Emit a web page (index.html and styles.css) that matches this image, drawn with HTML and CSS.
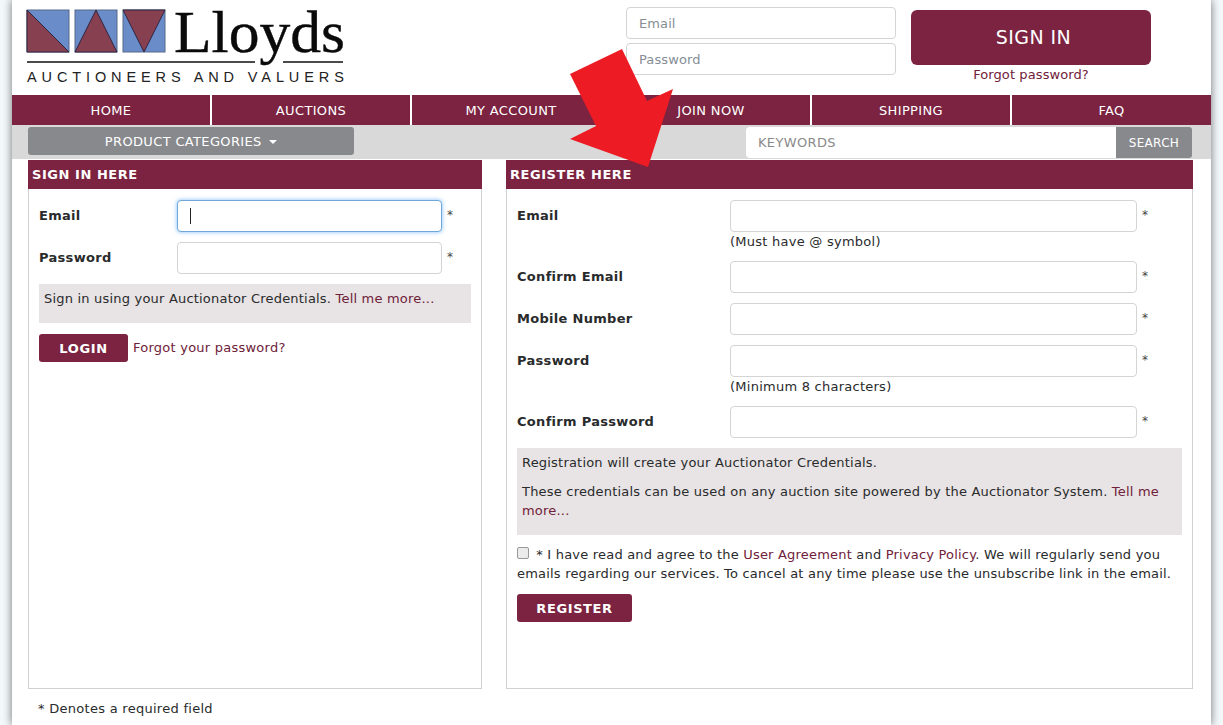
FILE: index.html
```html
<!DOCTYPE html>
<html lang="en">
<head>
    <meta charset="UTF-8">
    <meta name="viewport" content="width=device-width, initial-scale=1.0">
    <title>Lloyds Auctioneers - Sign In</title>
    <link rel="stylesheet" href="styles.css">
</head>
<body>
    <div class="page">
        <header class="top">
            <svg class="logo" width="340" height="95" viewBox="0 0 340 95">
                <rect x="15" y="10" width="42" height="42" fill="#6a8cc9" stroke="#56688a" stroke-width="1"/>
                <path d="M15 10L57 52H15Z" fill="#87404f" stroke="#2e2440" stroke-width="1"/>
                <rect x="63" y="10" width="42" height="42" fill="#6a8cc9" stroke="#56688a" stroke-width="1"/>
                <path d="M84 10L105 52H63Z" fill="#87404f" stroke="#2e2440" stroke-width="1"/>
                <rect x="111" y="10" width="42" height="42" fill="#6a8cc9" stroke="#56688a" stroke-width="1"/>
                <path d="M111 10H153L132 52Z" fill="#87404f" stroke="#2e2440" stroke-width="1"/>
                <text x="162" y="52" class="logo-name" textLength="171" lengthAdjust="spacingAndGlyphs">Lloyds</text>
                <path d="M15 62H243M271 62H331" stroke="#111" stroke-width="1.5"/>
                <text x="15" y="82" class="logo-sub" textLength="317">AUCTIONEERS AND VALUERS</text>
            </svg>
            <form class="quick-login">
                <div class="quick-fields">
                    <input class="field" type="text" placeholder="Email">
                    <input class="field" type="password" placeholder="Password">
                </div>
                <div class="quick-action">
                    <button class="signin-big" type="button">SIGN IN</button>
                    <a class="link" href="#">Forgot password?</a>
                </div>
            </form>
        </header>

        <nav class="menu">
            <a href="#">HOME</a>
            <a href="#">AUCTIONS</a>
            <a href="#">MY ACCOUNT</a>
            <a href="#">JOIN NOW</a>
            <a href="#">SHIPPING</a>
            <a href="#">FAQ</a>
        </nav>

        <div class="toolbar">
            <button class="categories" type="button">PRODUCT CATEGORIES <span class="caret"></span></button>
            <div class="search">
                <input type="text" placeholder="KEYWORDS">
                <button type="button">SEARCH</button>
            </div>
        </div>

        <main class="panels">
            <section class="panel panel-left">
                <h2>SIGN IN HERE</h2>
                <div class="panel-body">
                    <div class="row">
                        <label>Email</label>
                        <input class="field focused" type="text">
                        <span class="star">*</span>
                        <i class="cursor"></i>
                    </div>
                    <div class="row">
                        <label>Password</label>
                        <input class="field" type="password">
                        <span class="star">*</span>
                    </div>
                    <div class="info info-short">
                        <p>Sign in using your Auctionator Credentials. <a class="link" href="#">Tell me more...</a></p>
                    </div>
                    <div class="actions">
                        <button class="btn btn-login" type="button">LOGIN</button>
                        <a class="link" href="#">Forgot your password?</a>
                    </div>
                </div>
            </section>

            <section class="panel panel-right">
                <h2>REGISTER HERE</h2>
                <div class="panel-body">
                    <div class="row has-note">
                        <label>Email</label>
                        <input class="field" type="text">
                        <span class="star">*</span>
                        <small>(Must have @ symbol)</small>
                    </div>
                    <div class="row">
                        <label>Confirm Email</label>
                        <input class="field" type="text">
                        <span class="star">*</span>
                    </div>
                    <div class="row">
                        <label>Mobile Number</label>
                        <input class="field" type="text">
                        <span class="star">*</span>
                    </div>
                    <div class="row has-note">
                        <label>Password</label>
                        <input class="field" type="password">
                        <span class="star">*</span>
                        <small>(Minimum 8 characters)</small>
                    </div>
                    <div class="row">
                        <label>Confirm Password</label>
                        <input class="field" type="password">
                        <span class="star">*</span>
                    </div>
                    <div class="info">
                        <p>Registration will create your Auctionator Credentials.</p>
                        <p>These credentials can be used on any auction site powered by the Auctionator System. <a class="link" href="#">Tell me more...</a></p>
                    </div>
                    <p class="agree">
                        <input type="checkbox">
                        * I have read and agree to the <a class="link" href="#">User Agreement</a> and <a class="link" href="#">Privacy Policy</a>. We will regularly send you emails regarding our services. To cancel at any time please use the unsubscribe link in the email.
                    </p>
                    <button class="btn btn-register" type="button">REGISTER</button>
                </div>
            </section>
        </main>

        <footer class="note">* Denotes a required field</footer>
    </div>

    <svg class="arrow" width="110" height="125" viewBox="0 0 110 125">
        <path d="M0 25L52 0L77 52L103 40L78 118L0 90L26 77Z" fill="#ed1c24"/>
    </svg>
</body>
</html>
```

FILE: styles.css
```css
html {
    overflow: hidden;
}
body {
    margin: 0;
    height: 725px;
    overflow: hidden;
    background-color: #f4f9fc;
    font-family: "DejaVu Sans", Verdana, sans-serif;
    font-size: 13px;
    letter-spacing: 0.2px;
    color: #292b2c;
}
.page {
    position: relative;
    width: 1199px;
    height: 725px;
    margin-left: 12px;
    background-color: white;
    box-shadow: 0 0 9px rgba(0, 0, 0, 0.55);
}
.top {
    display: flex;
    height: 95px;
}
.logo {
    flex: none;
}
.logo-name {
    font-family: "Liberation Serif", serif;
    font-size: 60px;
    fill: #0a0a0a;
    stroke: #0a0a0a;
    stroke-width: 0.4px;
    letter-spacing: 0;
}
.logo-sub {
    font-family: "Liberation Sans", sans-serif;
    font-size: 14.5px;
    fill: #222;
}
.quick-login {
    display: flex;
    gap: 15px;
    margin-left: 274px;
    padding-top: 7px;
}
.quick-fields {
    display: flex;
    flex-direction: column;
    gap: 4px;
    width: 270px;
}
.field {
    box-sizing: border-box;
    height: 32px;
    padding: 0 12px;
    border: 1px solid #d4d4d4;
    border-radius: 4px;
    font-family: inherit;
    font-size: 13px;
    letter-spacing: 0.1px;
    background-color: white;
}
.field::placeholder {
    color: #868e96;
}
.quick-action {
    display: flex;
    flex-direction: column;
    align-items: center;
    width: 240px;
    padding-top: 3px;
}
.signin-big {
    width: 240px;
    height: 55px;
    padding: 0 0 2px 5px;
    border: none;
    border-radius: 6px;
    background-color: #7b2340;
    color: white;
    font-family: inherit;
    font-size: 19px;
    letter-spacing: 0.4px;
    cursor: pointer;
}
.quick-action .link {
    margin-top: 2px;
    letter-spacing: 0.1px;
    line-height: 15px;
}
.link {
    color: #6f2139;
    text-decoration: none;
}
.menu {
    display: grid;
    grid-template-columns: repeat(5, 200px) 1fr;
    height: 30px;
    background-color: #7b2340;
}
.menu a {
    padding-top: 2px;
    border-right: 2px solid white;
    color: white;
    font-size: 13px;
    letter-spacing: 0.35px;
    line-height: 28px;
    text-align: center;
    text-decoration: none;
}
.menu a:last-child {
    border-right: none;
}
.toolbar {
    display: flex;
    justify-content: space-between;
    box-sizing: border-box;
    height: 34px;
    padding: 2px 19px 0 16px;
    background-color: #d9d9d9;
}
.categories {
    width: 326px;
    height: 28px;
    border: none;
    border-radius: 3px;
    background-color: #88898d;
    color: white;
    font-family: inherit;
    font-size: 13px;
    letter-spacing: 0.35px;
}
.caret {
    display: inline-block;
    margin-left: 3px;
    border-top: 4px solid white;
    border-left: 4px solid transparent;
    border-right: 4px solid transparent;
    vertical-align: middle;
}
.search {
    display: flex;
    height: 31px;
}
.search input {
    box-sizing: border-box;
    width: 370px;
    padding: 0 12px;
    border: none;
    border-radius: 4px 0 0 4px;
    font-family: inherit;
    font-size: 13px;
    letter-spacing: 0.35px;
}
.search input::placeholder {
    color: #8a8a8a;
}
.search button {
    width: 76px;
    border: none;
    border-radius: 0 3px 3px 0;
    background-color: #88898d;
    color: white;
    font-family: inherit;
    font-size: 12px;
    letter-spacing: 0.3px;
}
.panels {
    display: flex;
    gap: 24px;
    height: 529px;
    margin-top: 1px;
    padding-left: 16px;
}
.panel {
    display: flex;
    flex-direction: column;
}
.panel-left {
    width: 454px;
}
.panel-right {
    width: 687px;
}
.panel h2 {
    margin: 0;
    height: 29px;
    padding-left: 4px;
    background-color: #7b2340;
    color: white;
    font-size: 13px;
    letter-spacing: 0.55px;
    line-height: 29px;
}
.panel-body {
    flex: 1;
    padding: 11px 10px 0;
    border: 1px solid #d0d0d0;
    border-top: none;
}
.row {
    position: relative;
    display: grid;
    align-items: start;
    margin-bottom: 10px;
}
.panel-left .row {
    grid-template-columns: 138px 265px auto;
}
.panel-right .row {
    grid-template-columns: 213px 407px auto;
}
.row label {
    font-weight: bold;
    letter-spacing: 0.3px;
    line-height: 32px;
}
.row .field {
    width: 100%;
}
.star {
    padding-left: 5px;
    font-size: 12px;
    color: #444;
    line-height: 30px;
}
.row small {
    grid-column: 2 / 4;
    margin-top: 1px;
    font-size: 13px;
    letter-spacing: 0.25px;
    line-height: 18px;
}
.focused {
    border-color: #6fa8d8;
    box-shadow: 0 0 4px rgba(0, 123, 255, 0.5);
}
.cursor {
    position: absolute;
    left: 151px;
    top: 8px;
    width: 1px;
    height: 16px;
    background-color: #222;
}
.info {
    padding: 5px;
    background-color: #e8e3e4;
    line-height: 19px;
}
.info p {
    margin: 0 0 10px;
}
.info p:last-child {
    margin-bottom: 10px;
}
.info-short {
    height: 39px;
    box-sizing: border-box;
}
.actions {
    display: flex;
    gap: 5px;
    margin-top: 11px;
}
.btn {
    height: 28px;
    border: none;
    border-radius: 3px;
    background-color: #7b2340;
    color: white;
    font-family: inherit;
    font-size: 13px;
    font-weight: bold;
    letter-spacing: 0.6px;
}
.btn-login {
    width: 89px;
}
.btn-register {
    width: 115px;
}
.actions .link {
    letter-spacing: 0.24px;
    line-height: 27px;
}
.agree {
    margin: 10px 0 11px;
    letter-spacing: 0.2px;
    line-height: 19px;
}
.agree input {
    appearance: none;
    box-sizing: border-box;
    width: 12px;
    height: 12px;
    margin: 0 3px 0 0;
    border: 1px solid #999;
    border-radius: 2px;
    background-color: #ececec;
}
.note {
    padding: 11px 0 0 26px;
    letter-spacing: 0.28px;
    line-height: 18px;
}
.arrow {
    position: absolute;
    left: 570px;
    top: 49px;
}
```
